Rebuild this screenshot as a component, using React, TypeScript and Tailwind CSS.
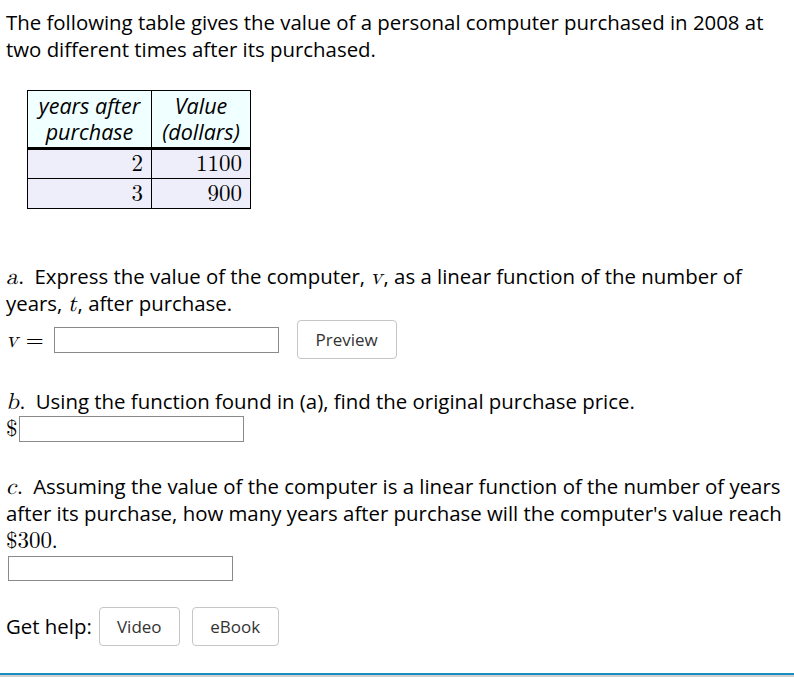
import React from "react";

const sans = "font-['Open_Sans',sans-serif]";
const mathFont = "font-['Latin_Modern_Math','Liberation_Serif',serif]";

function V({ children }: { children: React.ReactNode }) {
  return <span className={`${mathFont} mr-[1px] text-[23px] italic`}>{children}</span>;
}

function Btn({ children, className = "" }: { children: React.ReactNode; className?: string }) {
  return (
    <button
      className={`h-[39px] rounded-[4px] border border-[#c6c6c6] bg-white text-[17px] text-[#333] ${sans} ${className}`}
    >
      {children}
    </button>
  );
}

export default function App() {
  return (
    <div className={`relative h-[677px] w-[794px] overflow-hidden bg-white text-[20.4px] leading-[27px] text-black ${sans}`}>
      <div className="px-[6px] pt-[9px]">
        <p>
          The following table gives the value of a personal computer purchased in 2008 at two different times after its
          purchased.
        </p>

        {/* table */}
        <table className="ml-[21px] mt-[27px] border-collapse border border-black text-[21.5px] leading-[26px]">
          <thead>
            <tr className="bg-[#f0ffff] italic">
              <th className="w-[124px] border border-black border-b-[3px] px-[4px] py-[2px] text-center font-normal">
                years after
                <br />
                purchase
              </th>
              <th className="w-[99px] border border-black border-b-[3px] px-[4px] py-[2px] text-center font-normal">
                Value
                <br />
                (dollars)
              </th>
            </tr>
          </thead>
          <tbody className={`${mathFont} bg-[#eeeefa] text-[23px]`}>
            <tr className="h-[30px]">
              <td className="border border-black px-[8px] text-right">2</td>
              <td className="border border-black px-[8px] text-right">1100</td>
            </tr>
            <tr className="h-[30px]">
              <td className="border border-black px-[8px] text-right">3</td>
              <td className="border border-black px-[8px] text-right">900</td>
            </tr>
          </tbody>
        </table>

        {/* part a */}
        <p className="mt-[54px]">
          <V>a</V>.&nbsp; Express the value of the computer, <V>v</V>, as a linear function of the number of years,{" "}
          <V>t</V>, after purchase.
        </p>
        <div className="mt-[3px] flex items-center">
          <span className={`${mathFont} mr-[10px] text-[23px]`}>
            <span className="italic">v</span> =
          </span>
          <input className="h-[26px] w-[225px] border border-[#8a8a8a] bg-white" />
          <Btn className="ml-[18px] w-[100px]">Preview</Btn>
        </div>

        {/* part b */}
        <p className="mt-[29px]">
          <V>b</V>.&nbsp; Using the function found in (a), find the original purchase price.
        </p>
        <div className="flex items-center">
          <span className={`${mathFont} mr-[1px] text-[23px]`}>$</span>
          <input className="h-[26px] w-[225px] border border-[#8a8a8a] bg-white" />
        </div>

        {/* part c */}
        <p className="mt-[31px]">
          <V>c</V>.&nbsp; Assuming the value of the computer is a linear function of the number of years after its
          purchase, how many years after purchase will the computer's value reach{" "}
          <span className={`${mathFont} text-[23px]`}>$300</span>.
        </p>
        <input className="ml-[2px] mt-[2px] block h-[25px] w-[225px] border border-[#8a8a8a] bg-white" />

        <div className="mt-[26px] flex items-center">
          <span className="mr-[7px]">Get help:</span>
          <Btn className="w-[81px]">Video</Btn>
          <Btn className="ml-[12px] w-[87px]">eBook</Btn>
        </div>
      </div>

      <div className="absolute bottom-0 left-0 right-0 h-[4px] border-t-2 border-[#1a8fbf] bg-[#d0d0d0]" />
    </div>
  );
}
